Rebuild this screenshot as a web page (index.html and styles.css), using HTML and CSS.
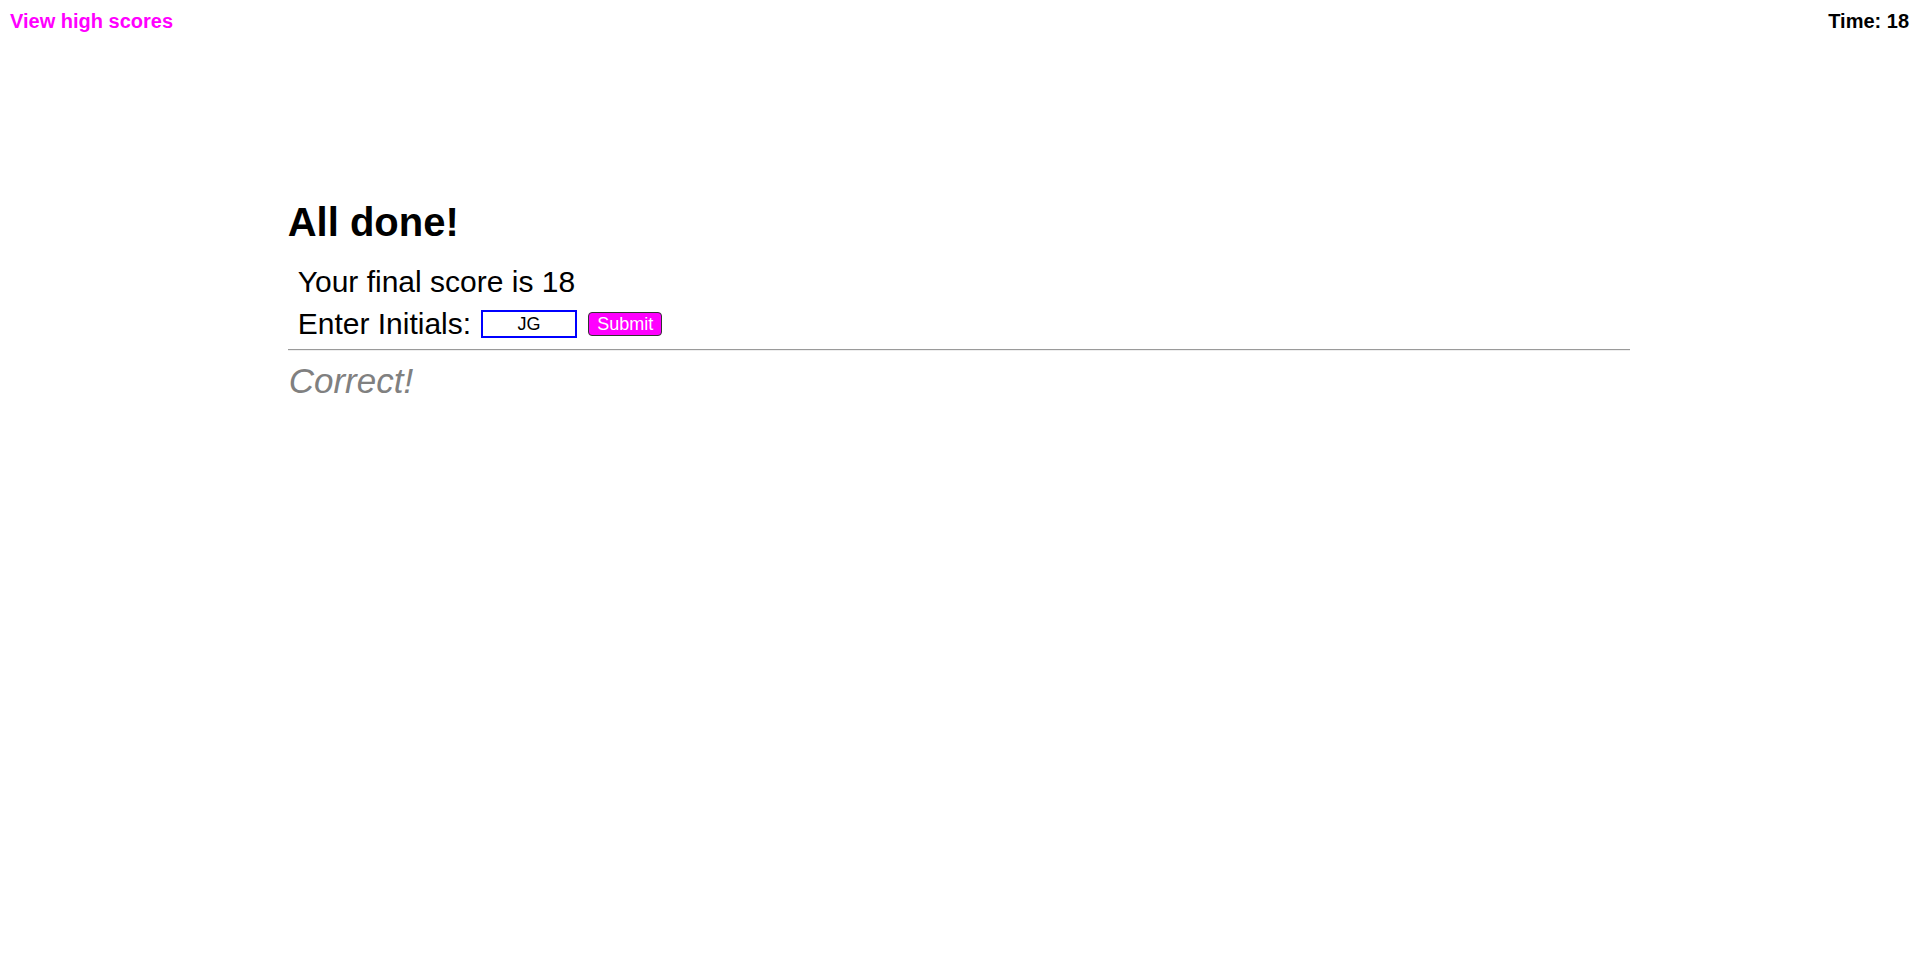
FILE: index.html
```html
<!DOCTYPE html>
<html lang="en">
<head>
<meta charset="utf-8">
<title>Code Quiz</title>
<link rel="stylesheet" href="styles.css">
</head>
<body>
<header class="top-bar">
  <a class="scores-link" href="#">View high scores</a>
  <div class="timer">Time: 18</div>
</header>
<main class="quiz">
  <h1 class="title">All done!</h1>
  <div class="result">
    <p class="final-score">Your final score is 18</p>
    <form class="initials-form">
      <label class="initials-label" for="initials">Enter Initials:</label>
      <input class="initials-input" id="initials" type="text" value="JG">
      <button class="submit-btn" type="button">Submit</button>
    </form>
  </div>
  <hr class="divider">
  <p class="feedback">Correct!</p>
</main>
</body>
</html>
```

FILE: styles.css
```css
html, body {
  margin: 0;
  padding: 0;
  background: #ffffff;
}

body {
  font-family: "Liberation Sans", Arial, sans-serif;
  color: #000000;
}

.top-bar {
  display: flex;
  justify-content: space-between;
  align-items: center;
  padding: 10px 9px 10px 10px;
  font-size: 20px;
  font-weight: bold;
  line-height: 23px;
}

.scores-link {
  color: #ff00ff;
  text-decoration: none;
}

.timer {
  color: #000000;
}

.quiz {
  width: 70%;
  margin: 156px auto 0;
}

.title {
  margin: 0;
  font-size: 40px;
  font-weight: bold;
  line-height: 46px;
}

.result {
  padding: 0 10px;
  margin-top: 20px;
}

.final-score {
  margin: 0;
  font-size: 30px;
  line-height: 34.5px;
}

.initials-form {
  display: flex;
  align-items: center;
  gap: 10px;
  margin: 7px 0 0;
}

.initials-label {
  font-size: 30px;
  line-height: 34.5px;
}

.initials-input {
  box-sizing: border-box;
  width: 96px;
  height: 28px;
  margin: 0;
  padding: 2px 2px 0;
  border: 2px solid #0000ff;
  font-family: "Liberation Sans", Arial, sans-serif;
  font-size: 18px;
  text-align: center;
  color: #000000;
  background: #ffffff;
  outline: none;
}

.submit-btn {
  box-sizing: border-box;
  height: 24px;
  margin: 0 0 0 1px;
  padding: 0 8px;
  border: 1px solid #333333;
  border-radius: 4px;
  background: #ff00ff;
  color: #ffffff;
  font-family: "Liberation Sans", Arial, sans-serif;
  font-size: 18px;
  line-height: 20px;
}

.divider {
  margin: 8px 0 0;
  height: 0;
  border: 0;
  border-top: 1px solid #9a9a9a;
  border-bottom: 1px solid #eeeeee;
}

.feedback {
  margin: 10px 0 0 1px;
  font-size: 35px;
  font-style: italic;
  color: #808080;
  line-height: 40px;
}
```
